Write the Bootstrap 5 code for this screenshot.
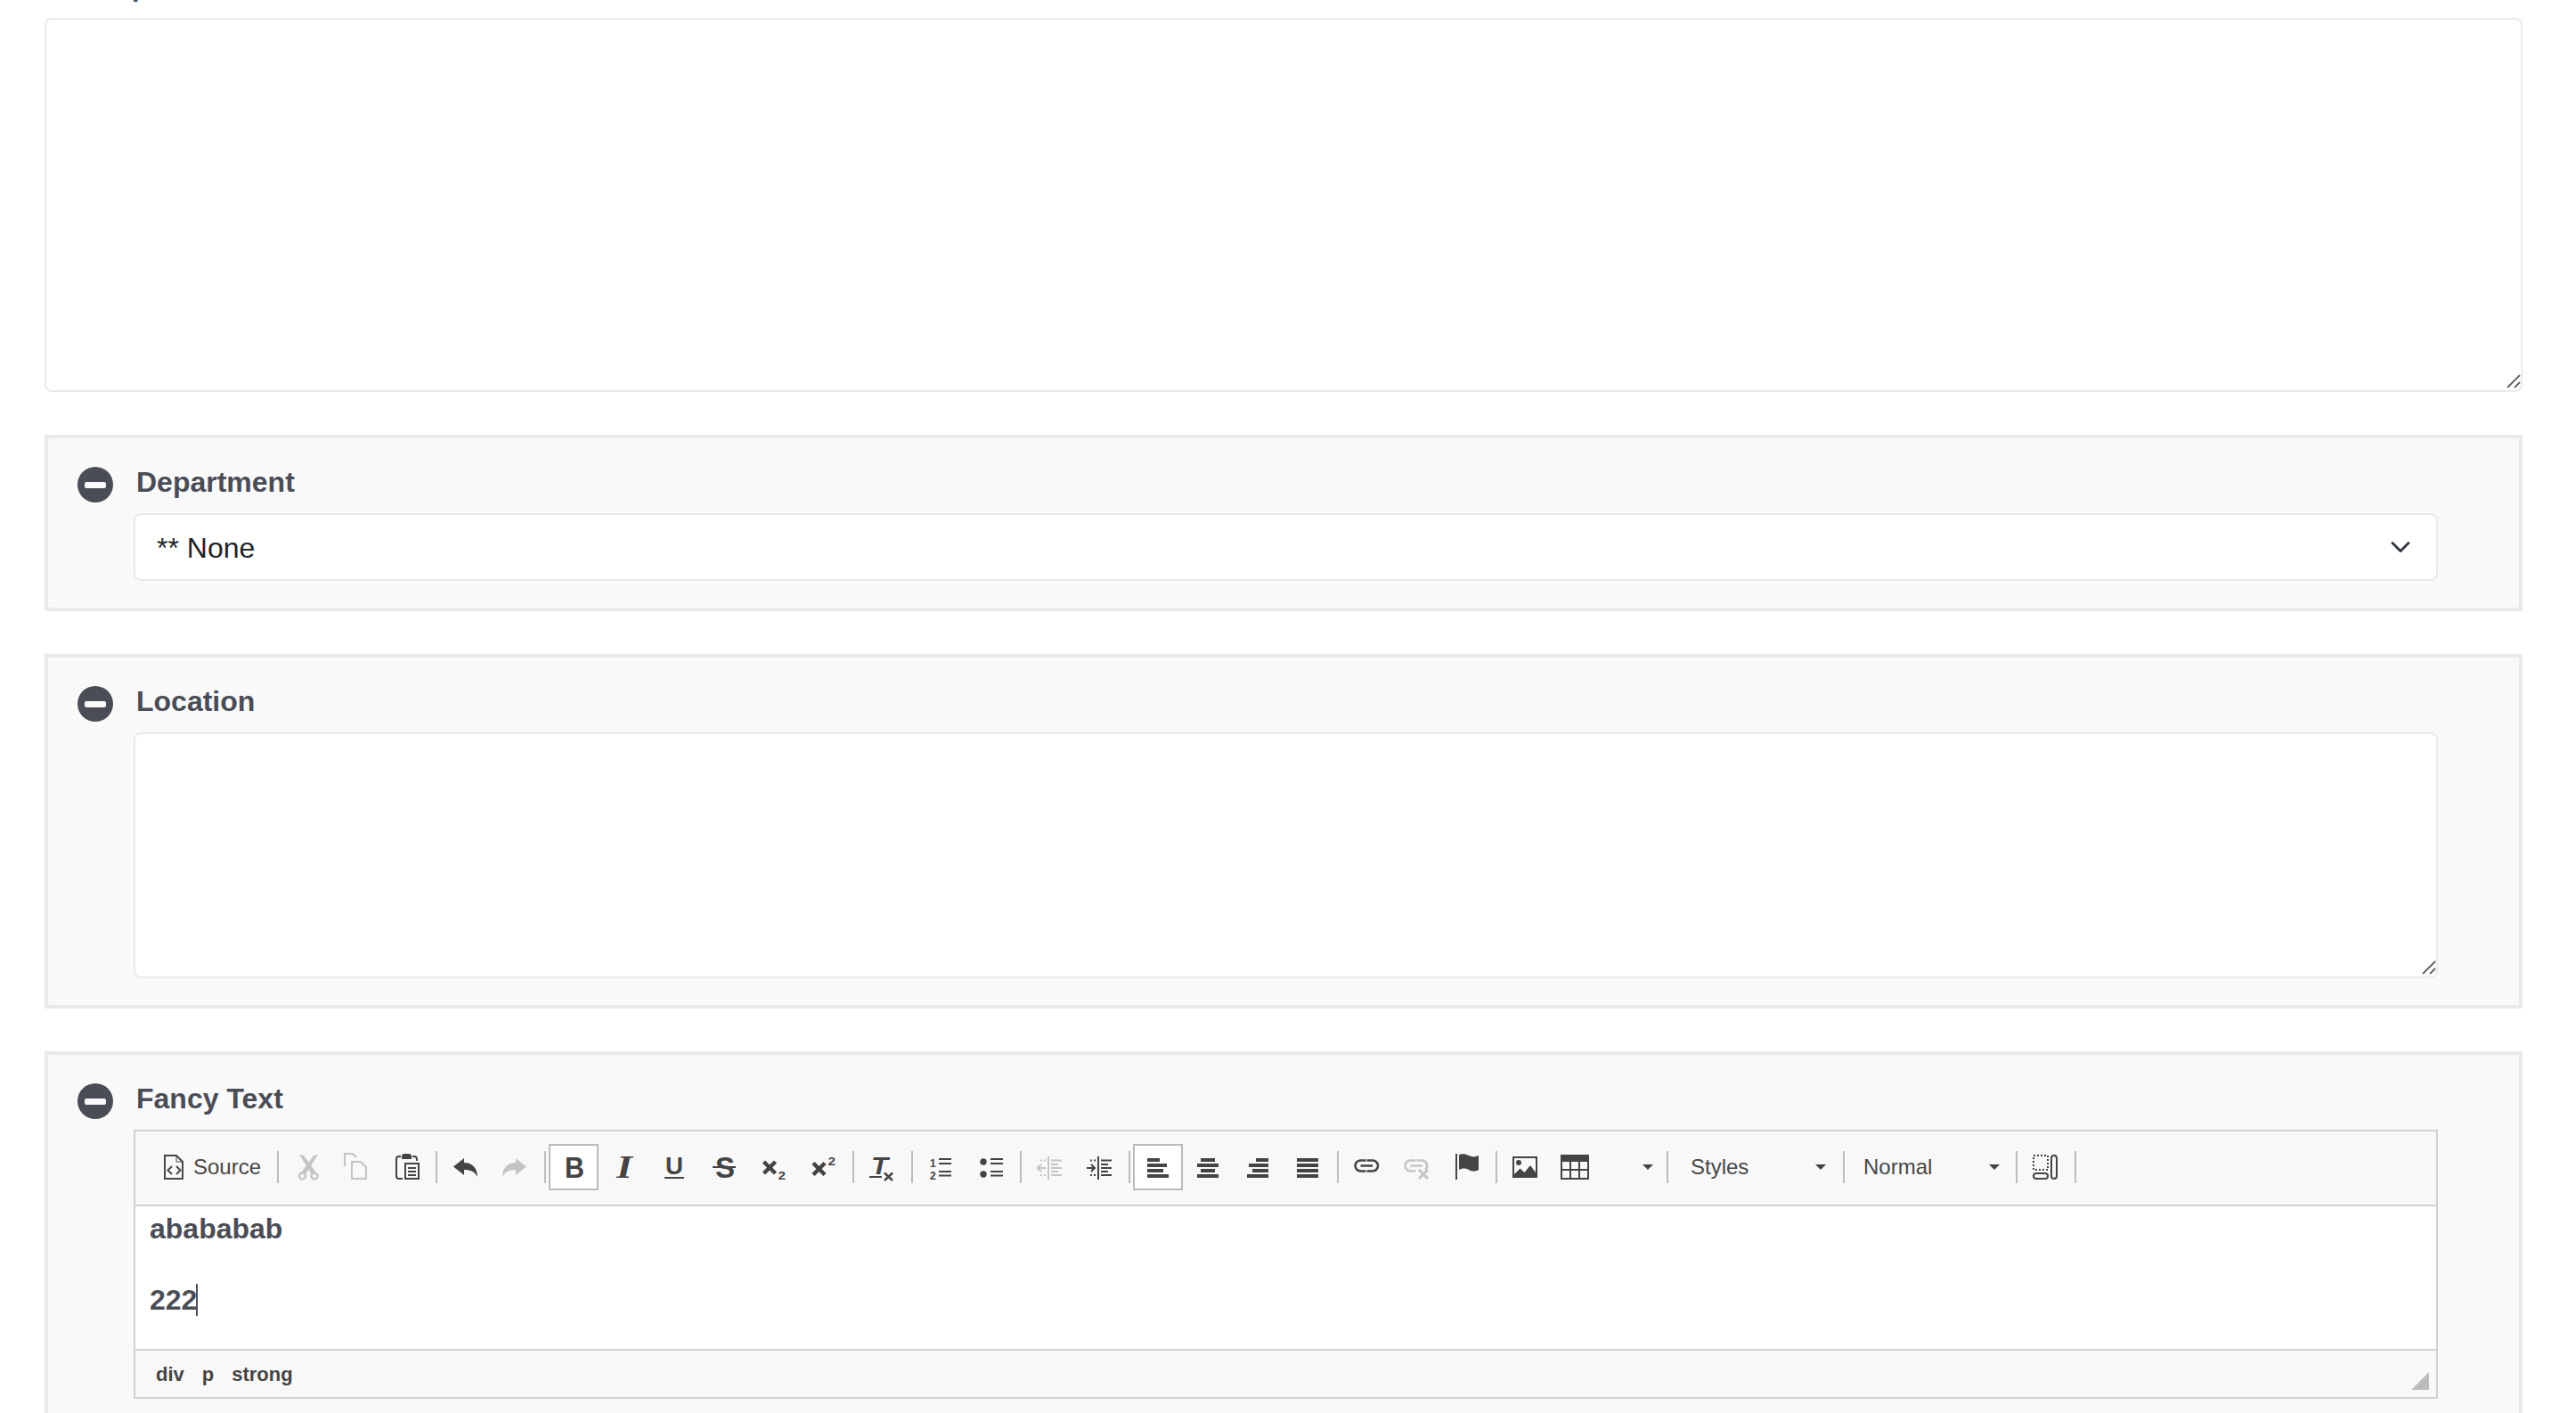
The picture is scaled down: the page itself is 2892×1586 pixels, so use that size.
<!DOCTYPE html>
<html lang="en">
<head>
<meta charset="utf-8">
<title>Form</title>
<link href="https://cdn.jsdelivr.net/npm/bootstrap@5.3.0/dist/css/bootstrap.min.css" rel="stylesheet">
<style>
html,body{height:1586px;overflow:hidden;background:#fff}
body{font-family:"Liberation Sans",Arial,sans-serif;color:#4a4d55}
.pg-wrap{padding:0 60px 0 50px}
.fld-label{font-size:32px;line-height:48px;font-weight:700;color:#4a4d55;margin:0}
.fld-head .fld-label{margin-top:1px}
.dsc-label{margin-top:-40px;margin-bottom:12px;display:block}
.fld-area-wrap{position:relative}
.fld-area.form-control{border:2px solid #eaeaea;border-radius:8px;background:#fff;font-size:32px;box-shadow:none;display:block;width:100%;resize:none}
.dsc-wrap{margin-bottom:48px}
.dsc-area.form-control{height:420px}
.loc-area.form-control{height:276px}
.fld-grip{position:absolute;right:2px;bottom:4px;width:16px;height:16px;display:block;pointer-events:none;fill:none;stroke:#666;stroke-width:2}
.fld-panel{background:#f9f9f9;border:4px solid #e9e9e9;padding:24px 91px 30px 33px;margin-bottom:48px}
.fld-head{height:60px;gap:26px}
.fld-minus{width:40px;height:40px;margin-top:8px;flex:none;display:block}
.fld-body{margin-left:63px}
.fld-select.form-select{border:2px solid #eaeaea;border-radius:8px;font-size:32px;line-height:48px;height:76px;padding:13px 72px 11px 24px;color:#212529;background-size:32px 24px;background-position:right 24px center;font-family:"Liberation Sans",Arial,sans-serif}
.ck-box{border:2px solid #d1d1d1;background:#f8f8f8;color:#444}
.ck-bar{height:84px;padding:14px 0 16px 16px;border-bottom:2px solid #d1d1d1}
.ck-cell{width:56px;height:52px;flex:none}
.ck-cell svg{display:block;flex:none;width:32px;height:32px;fill:none}
.ck-on{background:#fff;border:2px solid #bcbcbc}
.ck-off{color:#c4c4c4}
.ck-sep{width:2px;height:36px;background:#bcbcbc;margin:0 3px 0 5px;flex:none}
.ck-src{width:138px;height:52px;padding-left:16px;font-size:24px;color:#474747;flex:none}
.ck-src svg{width:24px;height:32px;flex:none;margin-right:9px;fill:none}
.ck-tbl-drop{width:70px;height:52px;padding-right:10px;flex:none}
.ck-combo{height:52px;font-size:24px;color:#474747;flex:none}
.ck-styles{width:188px;padding:0 14px 0 22px}
.ck-normal{width:184px;padding:0 13px 0 18px}
.ck-caret{width:0;height:0;border-left:6px solid transparent;border-right:6px solid transparent;border-top:6px solid #444}
.ck-body{background:#fff;height:162px;padding:5px 16px 0 16px;border-bottom:2px solid #d1d1d1;font-size:32px;line-height:40px;font-weight:700;color:#4a4d55}
.ck-body p{margin:0 0 40px}
.ck-cursor{border-right:2px solid #4a4d55;margin-left:-1px}
.ck-foot{height:52px;padding-left:23px;gap:20px;font-size:22px;font-weight:700;color:#444;position:relative}
.ck-grip{position:absolute;right:8px;bottom:8px;width:20px;height:20px;display:block;fill:#bcbcbc}
.gl{font-family:"Liberation Sans",Arial,sans-serif;font-weight:700;fill:currentColor}
.gls{font-family:"Liberation Serif",serif;font-weight:700;font-style:italic;fill:currentColor}
</style>
</head>
<body>
<div class="pg-wrap">
  <label class="fld-label dsc-label" for="descr">Description</label>
  <div class="fld-area-wrap dsc-wrap">
    <textarea id="descr" class="form-control fld-area dsc-area"></textarea>
    <svg class="fld-grip" viewBox="0 0 16 16"><path d="M1 15L15 1M9 15L15 9"/></svg>
  </div>

  <div class="fld-panel">
    <div class="d-flex align-items-start fld-head">
      <svg class="fld-minus" viewBox="0 0 40 40"><circle cx="20" cy="20" r="20" fill="#4a4d55"/><rect x="8" y="17" width="24" height="7" rx="2" fill="#f9f9f9"/></svg>
      <div class="fld-label">Department</div>
    </div>
    <div class="fld-body">
      <select class="form-select fld-select"><option>** None</option></select>
    </div>
  </div>

  <div class="fld-panel">
    <div class="d-flex align-items-start fld-head">
      <svg class="fld-minus" viewBox="0 0 40 40"><circle cx="20" cy="20" r="20" fill="#4a4d55"/><rect x="8" y="17" width="24" height="7" rx="2" fill="#f9f9f9"/></svg>
      <div class="fld-label">Location</div>
    </div>
    <div class="fld-body fld-area-wrap">
      <textarea class="form-control fld-area loc-area"></textarea>
      <svg class="fld-grip" viewBox="0 0 16 16"><path d="M1 15L15 1M9 15L15 9"/></svg>
    </div>
  </div>

  <div class="fld-panel">
    <div class="d-flex align-items-start fld-head">
      <svg class="fld-minus" viewBox="0 0 40 40"><circle cx="20" cy="20" r="20" fill="#4a4d55"/><rect x="8" y="17" width="24" height="7" rx="2" fill="#f9f9f9"/></svg>
      <div class="fld-label">Fancy Text</div>
    </div>
    <div class="fld-body">
      <div class="ck-box">
        <div class="ck-bar d-flex align-items-center">
          <div class="ck-src d-flex align-items-center">
            <svg viewBox="0 0 24 32" stroke="currentColor" stroke-width="2"><path d="M1 3H14L21 10V29H1Z"/><path d="M14 3V10H21" stroke-width="1"/><path d="M9 15L4.500 19.500L9 24M14 15L18.500 19.500L14 24"/></svg>
            <span>Source</span>
          </div>
          <i class="ck-sep"></i>
          <div class="ck-cell ck-off d-flex align-items-center justify-content-center">
            <svg viewBox="0 0 32 32" stroke="currentColor"><path d="M8 2L13 3L26 21L22 24Z" fill="currentColor" stroke="none"/><path d="M29 2L24 3L11 21L15 24Z" fill="currentColor" stroke="none"/><circle cx="11.500" cy="26" r="3.500" stroke-width="2.500"/><circle cx="25" cy="26" r="3.500" stroke-width="2.500"/></svg>
          </div>
          <div class="ck-cell ck-off d-flex align-items-center justify-content-center">
            <svg viewBox="0 0 32 32" stroke="currentColor" stroke-width="2"><path d="M3 15V1H12L16 5"/><path d="M11 10H21L27 16V29H11Z"/></svg>
          </div>
          <div class="ck-cell d-flex align-items-center justify-content-center">
            <svg viewBox="0 0 32 32" stroke="currentColor" stroke-width="2"><path d="M10 4H8Q5 4 5 7V26Q5 29 8 29H12M23 4H25Q28 4 28 7V9"/><path d="M11 7V4Q11 1 14 1H19Q22 1 22 4V7Z" fill="currentColor" stroke="none"/><rect x="15" y="12" width="15" height="17"/><path d="M18 17H27M18 21H27M18 25H27"/></svg>
          </div>
          <i class="ck-sep"></i>
          <div class="ck-cell d-flex align-items-center justify-content-center">
            <svg viewBox="0 0 32 32"><path d="M3 15.500L15 6V11C24 11 30 17 30 27C27 21 22 19 15 19V25Z" fill="currentColor"/></svg>
          </div>
          <div class="ck-cell ck-off d-flex align-items-center justify-content-center">
            <svg viewBox="0 0 32 32"><path d="M29 15.500L17 6V11C8 11 2 17 2 27C5 21 10 19 17 19V25Z" fill="currentColor"/></svg>
          </div>
          <i class="ck-sep"></i>
          <div class="ck-cell ck-on d-flex align-items-center justify-content-center">
            <svg viewBox="0 0 32 32"><text class="gl" x="6" y="28" font-size="33" textLength="22" lengthAdjust="spacingAndGlyphs">B</text></svg>
          </div>
          <div class="ck-cell d-flex align-items-center justify-content-center">
            <svg viewBox="0 0 32 32"><text class="gls" x="8" y="28" font-size="36" textLength="18" lengthAdjust="spacingAndGlyphs">I</text></svg>
          </div>
          <div class="ck-cell d-flex align-items-center justify-content-center">
            <svg viewBox="0 0 32 32"><text class="gl" x="7" y="24" font-size="28" textLength="20" lengthAdjust="spacingAndGlyphs">U</text><rect x="6" y="27" width="22" height="2" fill="currentColor"/></svg>
          </div>
          <div class="ck-cell d-flex align-items-center justify-content-center">
            <svg viewBox="0 0 32 32"><text class="gl" x="7" y="28" font-size="33" textLength="22" lengthAdjust="spacingAndGlyphs">S</text><rect x="4" y="15" width="26" height="2" fill="currentColor"/></svg>
          </div>
          <div class="ck-cell d-flex align-items-center justify-content-center">
            <svg viewBox="0 0 32 32" stroke="currentColor"><path d="M5.500 10L18.500 23M18.500 10L5.500 23" stroke-width="4.500"/><text class="gl" x="21.500" y="29.500" font-size="13" stroke="none" textLength="8.500" lengthAdjust="spacingAndGlyphs">2</text></svg>
          </div>
          <div class="ck-cell d-flex align-items-center justify-content-center">
            <svg viewBox="0 0 32 32" stroke="currentColor"><path d="M5 11.500L18 24.500M18 11.500L5 24.500" stroke-width="4.500"/><text class="gl" x="21.500" y="13.500" font-size="13" stroke="none" textLength="8.500" lengthAdjust="spacingAndGlyphs">2</text></svg>
          </div>
          <i class="ck-sep"></i>
          <div class="ck-cell d-flex align-items-center justify-content-center">
            <svg viewBox="0 0 32 32" stroke="currentColor"><text class="gl" x="4" y="24" font-size="28" font-style="italic" stroke="none" textLength="19" lengthAdjust="spacingAndGlyphs">T</text><path d="M2 27H16" stroke-width="2"/><path d="M19 22.500L28 31M28 22.500L19 31" stroke-width="2.500"/></svg>
          </div>
          <i class="ck-sep"></i>
          <div class="ck-cell d-flex align-items-center justify-content-center">
            <svg viewBox="0 0 32 32" stroke="currentColor" stroke-width="2"><path d="M14 7H28M14 12H28M14 21H28M14 25.500H28"/><text class="gl" x="4" y="15.500" font-size="12" stroke="none">1</text><text class="gl" x="4" y="30" font-size="12" stroke="none">2</text></svg>
          </div>
          <div class="ck-cell d-flex align-items-center justify-content-center">
            <svg viewBox="0 0 32 32" stroke="currentColor" stroke-width="2"><path d="M16 7H30M16 12H30M16 21H30M16 25.500H30"/><circle cx="8" cy="10" r="3.700" fill="currentColor" stroke="none"/><circle cx="8" cy="24" r="3.700" fill="currentColor" stroke="none"/></svg>
          </div>
          <i class="ck-sep"></i>
          <div class="ck-cell ck-off d-flex align-items-center justify-content-center">
            <svg viewBox="0 0 32 32" stroke="currentColor" stroke-width="2"><path d="M15 4V30"/><path d="M18 8.500H30M18 13H26M18 17H30M18 21H26M18 25H30"/><path d="M3 17H12M7 13L3 17L7 21"/><path d="M6 8.500H8M10 8.500H12M6 25H8M10 25H12"/></svg>
          </div>
          <div class="ck-cell d-flex align-items-center justify-content-center">
            <svg viewBox="0 0 32 32" stroke="currentColor" stroke-width="2"><path d="M15 4V30"/><path d="M18 8.500H30M18 13H26M18 17H30M18 21H26M18 25H30"/><path d="M2 17H11M7 13L11 17L7 21"/><path d="M6 8.500H8M10 8.500H12M6 25H8M10 25H12"/></svg>
          </div>
          <i class="ck-sep"></i>
          <div class="ck-cell ck-on d-flex align-items-center justify-content-center">
            <svg viewBox="0 0 32 32"><path fill="currentColor" d="M4 6H18V10H4ZM4 12H26V16H4ZM4 18H22V22H4ZM4 24H28V28H4Z"/></svg>
          </div>
          <div class="ck-cell d-flex align-items-center justify-content-center">
            <svg viewBox="0 0 32 32"><path fill="currentColor" d="M8 6H24V10H8ZM4 12H28V16H4ZM8 18H24V22H8ZM4 24H28V28H4Z"/></svg>
          </div>
          <div class="ck-cell d-flex align-items-center justify-content-center">
            <svg viewBox="0 0 32 32"><path fill="currentColor" d="M14 6H28V10H14ZM6 12H28V16H6ZM10 18H28V22H10ZM4 24H28V28H4Z"/></svg>
          </div>
          <div class="ck-cell d-flex align-items-center justify-content-center">
            <svg viewBox="0 0 32 32"><path fill="currentColor" d="M4 6H28V10H4ZM4 12H28V16H4ZM4 18H28V22H4ZM4 24H28V28H4Z"/></svg>
          </div>
          <i class="ck-sep"></i>
          <div class="ck-cell d-flex align-items-center justify-content-center">
            <svg viewBox="0 0 32 32" stroke="currentColor" stroke-width="2.500"><path d="M15.500 8.500H9.500A6 6 0 0 0 9.500 20.500H15.500M16.500 8.500H23A6 6 0 0 1 23 20.500H16.500M9.500 14.500H23"/></svg>
          </div>
          <div class="ck-cell ck-off d-flex align-items-center justify-content-center">
            <svg viewBox="0 0 32 32" stroke="currentColor" stroke-width="2.500"><path d="M15.500 8.500H9.500A6 6 0 0 0 9.500 20.500H15.500M16.500 8.500H23A6 6 0 0 1 26 19M9.500 14.500H23"/><path d="M19 19L29 29M29 19L19 29" stroke-width="3"/></svg>
          </div>
          <div class="ck-cell d-flex align-items-center justify-content-center">
            <svg viewBox="0 0 32 32"><rect x="4" y="1" width="2" height="29" fill="currentColor"/><path d="M8 2C12 0.500 15 1 19 3C23 5 26 4.500 30 3V19C26 21 23 21 19 19C15 17 12 17 8 19Z" fill="currentColor"/></svg>
          </div>
          <i class="ck-sep"></i>
          <div class="ck-cell d-flex align-items-center justify-content-center">
            <svg viewBox="0 0 32 32"><rect x="3" y="5" width="26" height="22" stroke="currentColor" stroke-width="2"/><circle cx="9" cy="11" r="3" fill="currentColor"/><path d="M4 26V24L10.500 17.500L15.500 22L22 14L28 22V26Z" fill="currentColor"/></svg>
          </div>
          <div class="ck-cell d-flex align-items-center justify-content-center">
            <svg viewBox="0 0 32 32"><path fill="currentColor" fill-rule="evenodd" d="M0 2H32V30H0ZM2 10V18H10V10ZM12 10V18H20V10ZM22 10V18H30V10ZM2 20V28H10V20ZM12 20V28H20V20ZM22 20V28H30V20Z"/></svg>
          </div>
          <div class="ck-tbl-drop d-flex align-items-center justify-content-end"><span class="ck-caret"></span></div>
          <i class="ck-sep"></i>
          <div class="ck-combo ck-styles d-flex align-items-center justify-content-between"><span>Styles</span><span class="ck-caret"></span></div>
          <i class="ck-sep"></i>
          <div class="ck-combo ck-normal d-flex align-items-center justify-content-between"><span>Normal</span><span class="ck-caret"></span></div>
          <i class="ck-sep"></i>
          <div class="ck-cell d-flex align-items-center justify-content-center">
            <svg viewBox="0 0 32 32" stroke="currentColor" stroke-width="2"><rect x="3" y="3" width="16" height="16" stroke-dasharray="2 2"/><rect x="3" y="23" width="16" height="6" rx="3"/><rect x="23" y="3" width="6" height="26" rx="3"/></svg>
          </div>
          <i class="ck-sep"></i>
        </div>
        <div class="ck-body">
          <p>abababab</p>
          <p>222<span class="ck-cursor"></span></p>
        </div>
        <div class="ck-foot d-flex align-items-center">
          <span>div</span><span>p</span><span>strong</span>
          <svg class="ck-grip" viewBox="0 0 20 20"><path d="M20 0V20H0Z"/></svg>
        </div>
      </div>
    </div>
  </div>
</div>
<script src="https://cdn.jsdelivr.net/npm/bootstrap@5.3.0/dist/js/bootstrap.bundle.min.js"></script>
</body>
</html>
